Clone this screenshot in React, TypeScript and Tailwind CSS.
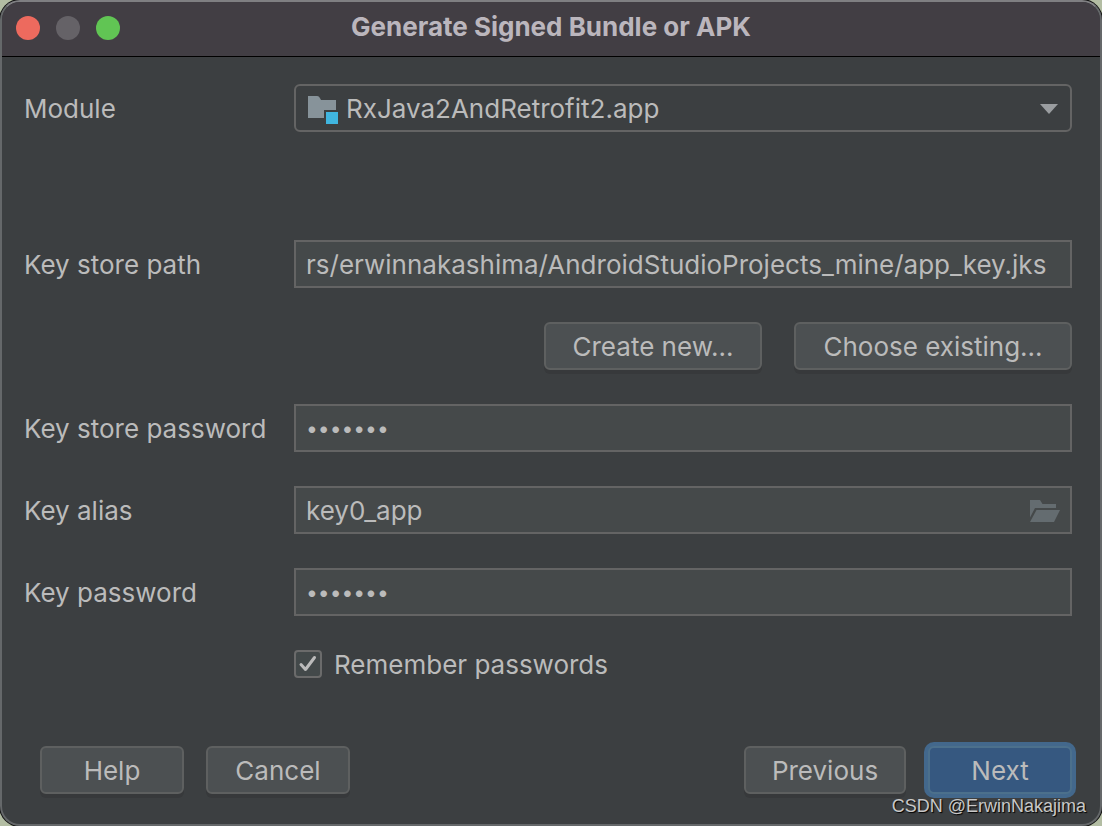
import type { ButtonHTMLAttributes, InputHTMLAttributes } from "react"
import { clsx } from "clsx"

const ModuleIcon = () => (
    <svg className="pointer-events-none absolute top-3 left-3 h-7 w-8" viewBox="0 0 32 28" aria-hidden="true">
        <path d="M2 0h9c2 0 2.600 1.500 4 4h15v10H18v8H2z" fill="#87939a"/>
        <path d="M20 16h12v12H20z" fill="#40b6e0"/>
    </svg>
)

const FolderIcon = () => (
    <svg className="h-[22px] w-[30px]" viewBox="0 0 30 22" aria-hidden="true">
        <path d="M0 0h10l2.500 4H26v4H5L0 17.500z" fill="#646c70"/>
        <path d="M6.500 10H30l-6 12H0z" fill="#646c70"/>
    </svg>
)

type FieldProps = InputHTMLAttributes<HTMLInputElement> & { id: string, label: string }

const Field = ({ id, label, type = "text", children, ...props }: FieldProps) => (
    <div className="grid grid-cols-[270px_1fr] items-center">
        <label htmlFor={id} className="pt-0.5">{label}</label>
        <div className="relative">
            <input
                id={id}
                type={type}
                className={clsx("block h-12 w-full border-2 border-[#646464] bg-[#45494a] px-[10px] outline-none", type === "password" && "text-[21px]")}
                {...props}
            />
            {children}
        </div>
    </div>
)

type ButtonProps = ButtonHTMLAttributes<HTMLButtonElement> & { primary?: boolean }

const Button = ({ primary, className, ...props }: ButtonProps) => (
    <button
        type="button"
        className={clsx(
            "h-12 rounded-md border-2 pt-0.5",
            primary ? "border-[#4c708c] bg-[#365880] shadow-[0_0_0_4px_#43688c]" : "border-[#5e6060] bg-[#4c5052] shadow-[0_4px_0_#37393b]",
            className
        )}
        {...props}
    />
)

export default function App() {
    return (
        <div className="min-h-screen bg-[#b3bda3] font-[Inter,sans-serif] text-[26px] leading-8 text-[#bbbbbb]">
            <main className="relative flex min-h-screen flex-col rounded-[20px] border-2 border-[#65686a] border-t-[#7f7f82] bg-[#3c3f41] shadow-[0_0_0_1px_#111]">
                <header className="grid h-[55px] shrink-0 grid-cols-[1fr_auto_1fr] items-center rounded-t-[18px] border-b border-black bg-[#423e44] px-[14px] pb-0.5">
                    <div className="flex gap-4">
                        <button type="button" aria-label="Close" className="size-6 rounded-full bg-[#ed6a5e]"/>
                        <button type="button" aria-label="Minimize" disabled className="size-6 rounded-full bg-[#656267]"/>
                        <button type="button" aria-label="Zoom" className="size-6 rounded-full bg-[#61c554]"/>
                    </div>
                    <h1 className="pb-0.5 font-bold text-[#bbb6bd]">Generate Signed Bundle or APK</h1>
                </header>

                <form className="flex flex-1 flex-col gap-[34px] pt-[27px] pr-7 pb-[30px] pl-[22px]">
                    <div className="mb-[74px] grid grid-cols-[270px_1fr] items-center">
                        <label htmlFor="module" className="pt-0.5">Module</label>
                        <div className="relative">
                            <select id="module" className="block h-12 w-full appearance-none rounded-md border-2 border-[#646464] bg-[#3c3f41] pt-0.5 pl-[50px] outline-none">
                                <option>RxJava2AndRetrofit2.app</option>
                            </select>
                            <ModuleIcon/>
                            <svg className="pointer-events-none absolute top-5 right-[14px] h-[10px] w-[18px]" viewBox="0 0 18 10" aria-hidden="true">
                                <path d="M0 0h18L9 10z" fill="#9a9da0"/>
                            </svg>
                        </div>
                    </div>

                    <Field id="store-path" label="Key store path" defaultValue="rs/erwinnakashima/AndroidStudioProjects_mine/app_key.jks"/>
                    <div className="flex justify-end gap-8">
                        <Button className="w-[218px]">Create new...</Button>
                        <Button className="w-[278px]">Choose existing...</Button>
                    </div>
                    <Field id="store-password" label="Key store password" type="password" defaultValue="android"/>
                    <Field id="alias" label="Key alias" defaultValue="key0_app">
                        <button type="button" aria-label="Browse aliases" className="absolute top-[14px] right-3">
                            <FolderIcon/>
                        </button>
                    </Field>
                    <Field id="key-password" label="Key password" type="password" defaultValue="android"/>

                    <label className="ml-[270px] flex h-7 items-center gap-3">
                        <span className="relative">
                            <input type="checkbox" defaultChecked className="peer block size-7 appearance-none rounded-[4px] border-2 border-[#6b6b6b] bg-[#43494a]"/>
                            <svg className="pointer-events-none absolute inset-0 hidden size-7 peer-checked:block" viewBox="0 0 28 28" fill="none" stroke="#bbbbbb" strokeLinecap="round" strokeLinejoin="round" strokeWidth="3" aria-hidden="true">
                                <path d="M7 14.500l4.500 5L20.500 7.500"/>
                            </svg>
                        </span>
                        <span className="pt-0.5">Remember passwords</span>
                    </label>

                    <div className="mt-auto flex justify-between pt-[34px] pl-4">
                        <div className="flex gap-[22px]">
                            <Button className="w-36">Help</Button>
                            <Button className="w-36">Cancel</Button>
                        </div>
                        <div className="flex gap-[22px]">
                            <Button className="w-[162px]">Previous</Button>
                            <Button primary className="w-36">Next</Button>
                        </div>
                    </div>
                </form>

                <p className="absolute right-[14px] bottom-1 font-['Liberation_Sans',sans-serif] text-[18px] leading-7 text-[#c8c8c8] [text-shadow:1px_1px_1px_#000]">CSDN @ErwinNakajima</p>
            </main>
        </div>
    )
}
